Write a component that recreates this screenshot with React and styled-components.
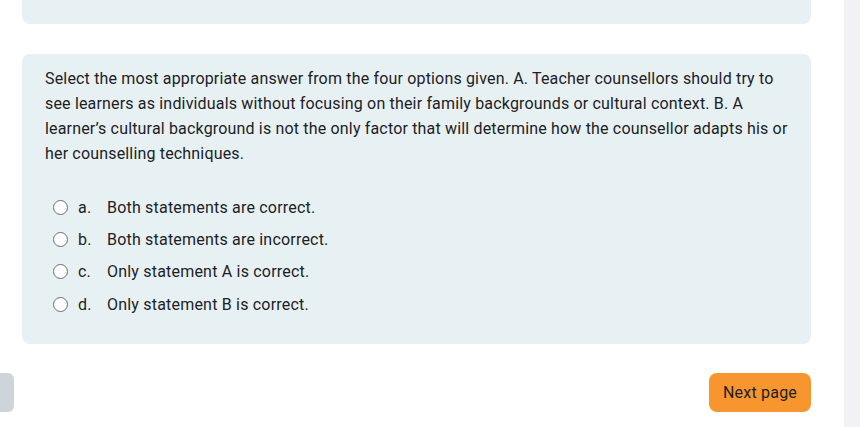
import styled, { createGlobalStyle } from "styled-components";

const GlobalStyle = createGlobalStyle`
  html, body {
    margin: 0;
    padding: 0;
    background: #ffffff;
  }
  body {
    font-family: Roboto, "Liberation Sans", sans-serif;
    color: #1d2125;
  }
`;

const options = [
  { letter: "a.", text: "Both statements are correct." },
  { letter: "b.", text: "Both statements are incorrect." },
  { letter: "c.", text: "Only statement A is correct." },
  { letter: "d.", text: "Only statement B is correct." },
];

function App() {
  return (
    <>
      <GlobalStyle />
      <Page>
        <Main>
          <Content>
            <TopCard />
            <QuestionCard>
              <QuestionText>
                Select the most appropriate answer from the four options given. A. Teacher counsellors should try to
                see learners as individuals without focusing on their family backgrounds or cultural context. B. A
                learner’s cultural background is not the only factor that will determine how the counsellor adapts his or
                her counselling techniques.
              </QuestionText>
              <OptionList>
                {options.map((o) => (
                  <Option key={o.letter}>
                    <Radio type="radio" name="answer" />
                    <Letter>{o.letter}</Letter>
                    <span>{o.text}</span>
                  </Option>
                ))}
              </OptionList>
            </QuestionCard>
          </Content>
          <Footer>
            <PrevButton />
            <NextButton>Next page</NextButton>
          </Footer>
        </Main>
        <Scrollbar />
      </Page>
    </>
  );
}

export default App;

const Page = styled.div`
  display: flex;
  height: 427px;
  overflow: hidden;
`;

const Main = styled.div`
  flex: 1;
  display: flex;
  flex-direction: column;
`;

const Content = styled.div`
  display: flex;
  flex-direction: column;
  gap: 30px;
  padding: 0 33px 0 22px;
`;

const TopCard = styled.div`
  height: 24px;
  background: #e7f1f4;
  border-radius: 0 0 8px 8px;
`;

const QuestionCard = styled.div`
  background: #e7f1f4;
  border-radius: 8px;
  padding: 12px 18px 23px 23px;
`;

const QuestionText = styled.p`
  margin: 0;
  font-size: 16px;
  line-height: 25px;
  letter-spacing: 0.17px;
  color: #1d2125;
`;

const OptionList = styled.div`
  display: flex;
  flex-direction: column;
  margin-top: 25px;
`;

const Option = styled.label`
  display: flex;
  align-items: center;
  height: 32.4px;
  padding-left: 8px;
  font-size: 16px;
  letter-spacing: 0.2px;
  color: #1d2125;
`;

const Radio = styled.input`
  appearance: none;
  margin: 0 10px 0 0;
  width: 15px;
  height: 15px;
  border: 1px solid #6a6f75;
  border-radius: 50%;
  background: #ffffff;
  box-sizing: border-box;
`;

const Letter = styled.span`
  width: 29px;
`;

const Footer = styled.div`
  display: flex;
  justify-content: space-between;
  align-items: center;
  margin-top: 29px;
  padding-right: 33px;
`;

const PrevButton = styled.div`
  width: 14px;
  height: 39px;
  background: #ced4da;
  border-radius: 0 6px 6px 0;
`;

const NextButton = styled.button`
  height: 39px;
  padding: 0 14px;
  border: none;
  border-radius: 8px;
  background: #f7962f;
  color: #1d2125;
  font-family: Roboto, "Liberation Sans", sans-serif;
  font-size: 16px;
  letter-spacing: 0.2px;
`;

const Scrollbar = styled.div`
  width: 16px;
  background: #f1f1f6;
`;
